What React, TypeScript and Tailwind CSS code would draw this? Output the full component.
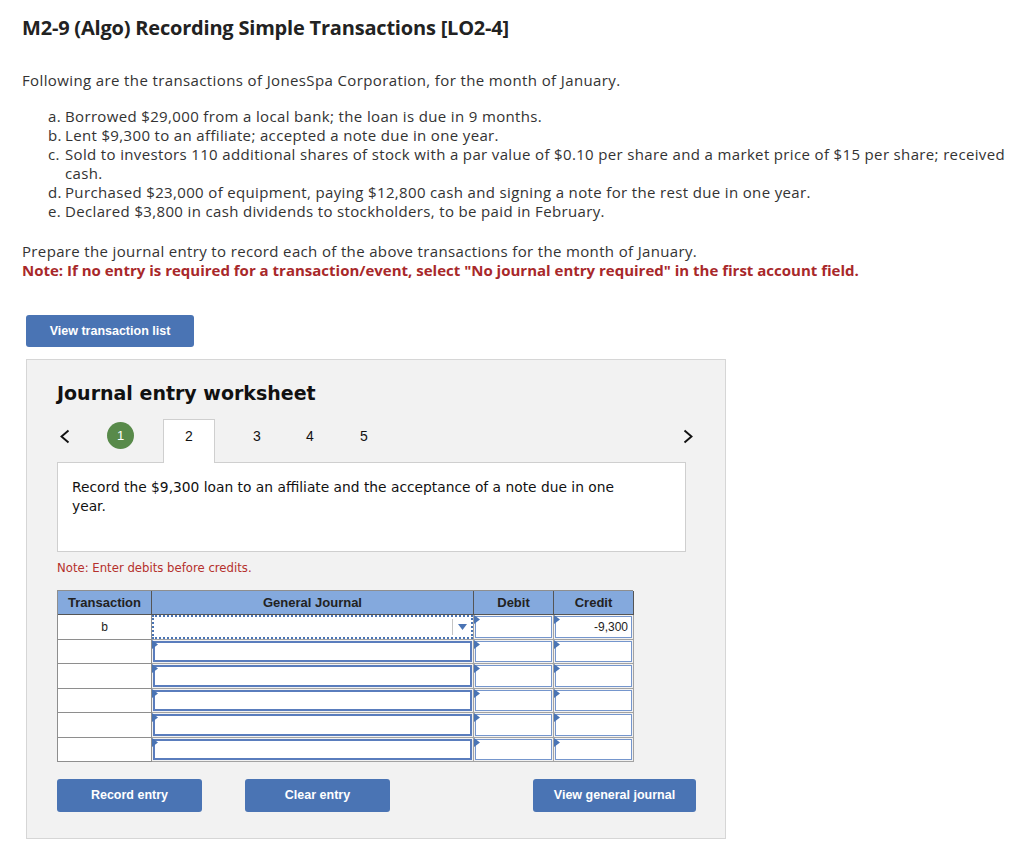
import React from "react";

const body = { fontFamily: '"Open Sans", Roboto, sans-serif' };
const verd = { fontFamily: '"DejaVu Sans", Verdana, sans-serif' };
const arial = { fontFamily: '"Liberation Sans", Arial, sans-serif' };

const transactions = [
  { k: "a.", t: "Borrowed $29,000 from a local bank; the loan is due in 9 months." },
  { k: "b.", t: "Lent $9,300 to an affiliate; accepted a note due in one year." },
  {
    k: "c.",
    t: "Sold to investors 110 additional shares of stock with a par value of $0.10 per share and a market price of $15 per share; received",
    t2: "cash.",
  },
  { k: "d.", t: "Purchased $23,000 of equipment, paying $12,800 cash and signing a note for the rest due in one year." },
  { k: "e.", t: "Declared $3,800 in cash dividends to stockholders, to be paid in February." },
];

function Chevron({ dir }: { dir: "left" | "right" }) {
  return (
    <svg width="10" height="15" viewBox="0 0 10 15">
      <polyline
        points={dir === "left" ? "8.5,1.5 1.5,7.5 8.5,13.5" : "1.5,1.5 8.5,7.5 1.5,13.5"}
        fill="none"
        stroke="#111"
        strokeWidth="1.9"
      />
    </svg>
  );
}

function Flag() {
  return (
    <svg className="absolute left-0 top-0" width="6" height="9" viewBox="0 0 6 9">
      <polygon points="0,0 6,4.5 0,9" fill="#4a74b4" />
    </svg>
  );
}

function Btn({ label, w }: { label: string; w: string }) {
  return (
    <button
      className={`${w} rounded-[3px] bg-[#4a74b4] text-white text-[12.5px] font-bold`}
      style={arial}
    >
      {label}
    </button>
  );
}

function InputCell({ value, thick }: { value?: string; thick?: boolean }) {
  return (
    <div className="relative h-full border-r border-b border-[#a3a3a3] p-px">
      <div
        className={`h-full bg-white flex items-center justify-end pr-[3px] text-[12px] text-[#222] ${
          thick ? "border-2 border-[#5a7dbd]" : "border border-[#7596cd]"
        }`}
        style={arial}
      >
        {value}
      </div>
      <Flag />
    </div>
  );
}

export default function App() {
  const rows = [0, 1, 2, 3, 4, 5];
  return (
    <div className="w-[1024px] min-h-[845px] bg-white pl-[22px] pr-[20px] pt-[14px] text-[#333]" style={body}>
      <h1 className="text-[20px] leading-[28px] font-bold tracking-[-0.2px] text-[#222]">
        M2-9 (Algo) Recording Simple Transactions [LO2-4]
      </h1>

      <p className="mt-[29px] text-[15px] leading-[19px] tracking-[0.38px]">
        Following are the transactions of JonesSpa Corporation, for the month of January.
      </p>

      <div className="mt-[17px] pl-[26px] text-[15px] leading-[19px] tracking-[0.35px]">
        {transactions.map((tr) => (
          <div key={tr.k} className="flex">
            <span className="w-[17px] shrink-0">{tr.k}</span>
            <span>
              <span className="whitespace-nowrap">{tr.t}</span>
              {tr.t2 && (
                <>
                  <br />
                  {tr.t2}
                </>
              )}
            </span>
          </div>
        ))}
      </div>

      <p className="mt-[21px] text-[15px] leading-[19px] tracking-[0.35px]">
        Prepare the journal entry to record each of the above transactions for the month of January.
      </p>
      <p className="text-[15px] leading-[19px] font-bold text-[#a8282a] whitespace-nowrap">
        Note: If no entry is required for a transaction/event, select "No journal entry required" in the first
        account field.
      </p>

      <div className="ml-[4px] mt-[35px]">
        <Btn label="View transaction list" w="w-[168px] h-[32px]" />
      </div>

      <div className="ml-[4px] mt-[12px] w-[700px] h-[480px] border border-[#d6d6d6] bg-[#f2f2f2] pl-[30px] pt-[21px]">
        <h2 className="text-[19px] leading-[24px] font-bold text-[#111]" style={verd}>
          Journal entry worksheet
        </h2>

        <div className="mt-[14px] flex h-[43px] w-[636px] items-start text-[14px] text-[#111]" style={arial}>
          <div className="pl-[3px] pt-[10px]">
            <Chevron dir="left" />
          </div>
          <div className="ml-[37px] mt-[3px] flex h-[27px] w-[27px] items-center justify-center rounded-full bg-[#588a4a] text-white text-[13px]">
            1
          </div>
          <div className="relative z-10 ml-[29px] h-[44px] w-[52px] border border-b-0 border-[#cfcfcf] bg-white pt-[6px] text-center leading-[20px]">
            2
          </div>
          <div className="ml-[32px] w-[20px] pt-[7px] text-center leading-[20px]">3</div>
          <div className="ml-[33px] w-[20px] pt-[7px] text-center leading-[20px]">4</div>
          <div className="ml-[34px] w-[20px] pt-[7px] text-center leading-[20px]">5</div>
          <div className="ml-auto pt-[10px]">
            <Chevron dir="right" />
          </div>
        </div>

        <div className="h-[90px] w-[629px] border border-[#cfcfcf] bg-white px-[14px] pt-[15px] text-[13.8px] leading-[19px] text-[#111]" style={verd}>
          Record the $9,300 loan to an affiliate and the acceptance of a note due in one
          <br />
          year.
        </div>

        <p className="mt-[8px] text-[11.7px] leading-[16px] text-[#b5302c]" style={verd}>
          Note: Enter debits before credits.
        </p>

        <div
          className="mt-[14px] grid w-[576px] grid-cols-[94px_322px_80px_80px] border-l border-t border-[#8e8e8e] text-[#222]"
          style={arial}
        >
          <div className="flex h-[24px] items-center justify-center border-r border-b border-[#555] bg-[#84a9dd] text-[13px] font-bold">
            Transaction
          </div>
          <div className="flex h-[24px] items-center justify-center border-r border-b border-[#555] bg-[#84a9dd] text-[13px] font-bold">
            General Journal
          </div>
          <div className="flex h-[24px] items-center justify-center border-r border-b border-[#555] bg-[#84a9dd] text-[13px] font-bold">
            Debit
          </div>
          <div className="flex h-[24px] items-center justify-center border-r border-b border-[#555] bg-[#84a9dd] text-[13px] font-bold">
            Credit
          </div>

          {rows.map((r) => (
            <React.Fragment key={r}>
              <div className="flex h-[24.5px] items-center justify-center border-r border-b border-[#8e8e8e] bg-white text-[12px]">
                {r === 0 ? "b" : ""}
              </div>
              {r === 0 ? (
                <div className="relative h-[24.5px] border-r border-b border-[#a3a3a3] bg-white">
                  <div className="absolute inset-0 border-2 border-dotted border-[#4a74b4]" />
                  <div className="absolute right-[20px] top-[4px] h-[16px] w-px bg-[#c4c4c4]" />
                  <svg className="absolute right-[6px] top-[9px]" width="9" height="6" viewBox="0 0 9 6">
                    <polygon points="0,0 9,0 4.5,6" fill="#4a74b4" />
                  </svg>
                </div>
              ) : (
                <div className="h-[24.5px]">
                  <InputCell thick />
                </div>
              )}
              <div className="h-[24.5px]">
                <InputCell />
              </div>
              <div className="h-[24.5px]">
                <InputCell value={r === 0 ? "-9,300" : undefined} />
              </div>
            </React.Fragment>
          ))}
        </div>

        <div className="mt-[17px] flex">
          <Btn label="Record entry" w="w-[145px] h-[33px]" />
          <div className="ml-[43px]">
            <Btn label="Clear entry" w="w-[145px] h-[33px]" />
          </div>
          <div className="ml-[143px]">
            <Btn label="View general journal" w="w-[163px] h-[33px]" />
          </div>
        </div>
      </div>
    </div>
  );
}
